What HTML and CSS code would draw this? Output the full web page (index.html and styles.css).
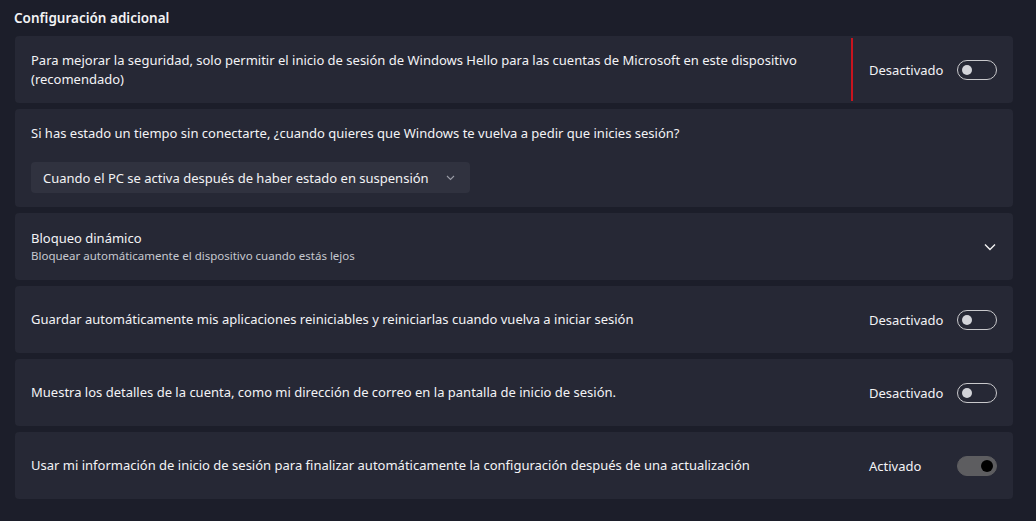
FILE: index.html
```html
<!DOCTYPE html>
<html lang="es">
<head>
    <meta charset="UTF-8">
    <title>Configuración adicional</title>
    <link rel="stylesheet" href="styles.css">
</head>
<body>
    <div class="page">
        <h2 class="section-title">Configuración adicional</h2>

        <div class="card row">
            <div class="row-text">
                <p>Para mejorar la seguridad, solo permitir el inicio de sesión de Windows Hello para las cuentas de Microsoft en este dispositivo (recomendado)</p>
            </div>
            <div class="focus-line"></div>
            <span class="state">Desactivado</span>
            <span class="toggle"></span>
        </div>

        <div class="card block">
            <p>Si has estado un tiempo sin conectarte, ¿cuando quieres que Windows te vuelva a pedir que inicies sesión?</p>
            <div class="dropdown">
                <span>Cuando el PC se activa después de haber estado en suspensión</span>
                <svg class="dropdown-arrow" width="9" height="6" viewBox="0 0 9 6"><path d="M1 1 L4.5 4.5 L8 1" fill="none" stroke="#9a9ca6" stroke-width="1.1"/></svg>
            </div>
        </div>

        <div class="card row">
            <div class="row-text">
                <p>Bloqueo dinámico</p>
                <p class="sub">Bloquear automáticamente el dispositivo cuando estás lejos</p>
            </div>
            <svg class="expand" width="12" height="8" viewBox="0 0 12 8"><path d="M1 1.5 L6 6.5 L11 1.5" fill="none" stroke="#f2f2f2" stroke-width="1.4"/></svg>
        </div>

        <div class="card row">
            <div class="row-text">
                <p>Guardar automáticamente mis aplicaciones reiniciables y reiniciarlas cuando vuelva a iniciar sesión</p>
            </div>
            <span class="state">Desactivado</span>
            <span class="toggle"></span>
        </div>

        <div class="card row">
            <div class="row-text">
                <p>Muestra los detalles de la cuenta, como mi dirección de correo en la pantalla de inicio de sesión.</p>
            </div>
            <span class="state">Desactivado</span>
            <span class="toggle"></span>
        </div>

        <div class="card row">
            <div class="row-text">
                <p>Usar mi información de inicio de sesión para finalizar automáticamente la configuración después de una actualización</p>
            </div>
            <span class="state">Activado</span>
            <span class="toggle on"></span>
        </div>
    </div>
</body>
</html>
```

FILE: styles.css
```css
body {
    margin: 0;
    background-color: #1c1e2a;
    color: #f3f3f5;
    font-family: "Noto Sans", "Open Sans", sans-serif;
    font-size: 13px;
}
p {
    margin: 0;
}
.page {
    padding: 8px 23px 0 15px;
    display: flex;
    flex-direction: column;
    gap: 6px;
}
.section-title {
    margin: 0 0 2px -1px;
    font-size: 13.5px;
    font-weight: 600;
    line-height: 20px;
}
.card {
    background-color: #262835;
    border-radius: 4px;
}
.row {
    height: 67px;
    padding: 0 16px;
    display: flex;
    align-items: center;
}
.row-text {
    flex: 1;
    line-height: 19px;
    padding-right: 40px;
}
.row-text .sub {
    font-size: 11.5px;
    line-height: 16px;
    color: #c6c8d0;
}
.focus-line {
    align-self: stretch;
    width: 2px;
    margin: 2px 16px 2px 0;
    background-color: #c8141e;
}
.state {
    width: 88px;
}
.toggle {
    position: relative;
    box-sizing: border-box;
    width: 40px;
    height: 20px;
    border: 1px solid #c9c9cc;
    border-radius: 10px;
}
.toggle::after {
    content: "";
    position: absolute;
    left: 4px;
    top: 4px;
    width: 10px;
    height: 10px;
    border-radius: 50%;
    background-color: #d2d3d8;
}
.toggle.on {
    border-color: #5d5d60;
    background-color: #5d5d60;
}
.toggle.on::after {
    left: auto;
    right: 3px;
    top: 3px;
    width: 12px;
    height: 12px;
    background-color: #000;
}
.block {
    padding: 14px 16px;
    line-height: 20px;
}
.dropdown {
    margin-top: 19px;
    width: 439px;
    height: 31px;
    box-sizing: border-box;
    padding: 0 15px 0 12px;
    display: flex;
    align-items: center;
    justify-content: space-between;
    background-color: #30323f;
    border-radius: 4px;
}
.expand {
    margin-right: 1px;
}
```
